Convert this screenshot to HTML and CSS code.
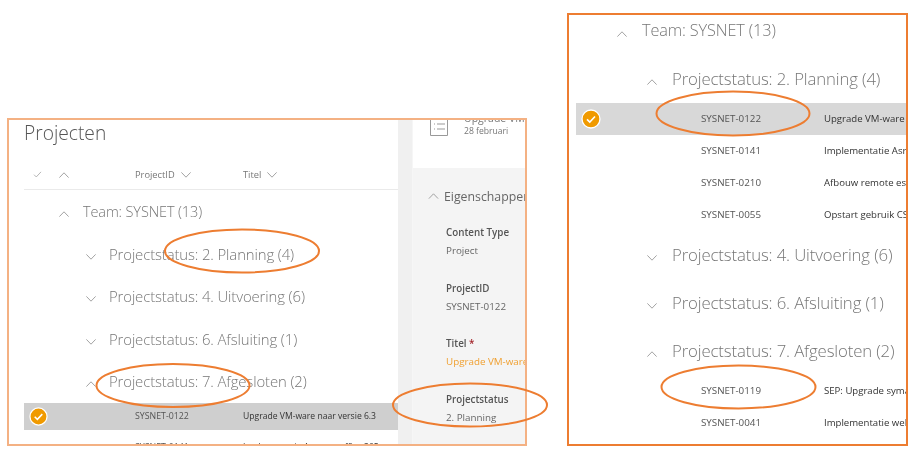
FILE: index.html
```html
<!DOCTYPE html>
<html lang="nl">
<head>
<meta charset="utf-8">
<title>Projecten</title>
<link rel="stylesheet" href="styles.css">
</head>
<body>
<svg width="0" height="0" class="defs">
  <symbol id="up" viewBox="0 0 10 6"><path d="M.4 5.6 5 .8l4.600 4.800" fill="none" stroke="#999" stroke-width=".9"/></symbol>
  <symbol id="down" viewBox="0 0 10 6"><path d="M.4 .4 5 5.200 9.600 .4" fill="none" stroke="#999" stroke-width=".9"/></symbol>
  <symbol id="tick" viewBox="0 0 10 8"><path d="M1 4.200 3.600 6.800 9 1" fill="none" stroke="#aaa" stroke-width="1"/></symbol>
  <symbol id="checked" viewBox="0 0 20 20"><circle cx="10" cy="10" r="9" fill="#f09a00" stroke="#fff" stroke-width="1.300"/><path d="M6 10.300 8.800 13 14 7.500" fill="none" stroke="#fff" stroke-width="1.600"/></symbol>
</svg>

<main class="canvas">
  <section class="panel panel-left">
    <div class="list">
      <h1 class="title">Projecten</h1>
      <div class="head">
        <svg class="tick"><use href="#tick"/></svg>
        <svg class="chev head-chev"><use href="#up"/></svg>
        <span class="col-id">ProjectID <svg class="chev"><use href="#down"/></svg></span>
        <span class="col-title">Titel <svg class="chev"><use href="#down"/></svg></span>
      </div>
      <div class="group team"><svg class="chev"><use href="#up"/></svg><span>Team: SYSNET (13)</span></div>
      <div class="group status"><svg class="chev"><use href="#down"/></svg><span>Projectstatus: 2. Planning (4)</span></div>
      <div class="group status"><svg class="chev"><use href="#down"/></svg><span>Projectstatus: 4. Uitvoering (6)</span></div>
      <div class="group status"><svg class="chev"><use href="#down"/></svg><span>Projectstatus: 6. Afsluiting (1)</span></div>
      <div class="group status"><svg class="chev"><use href="#up"/></svg><span>Projectstatus: 7. Afgesloten (2)</span></div>
      <div class="item selected"><span class="check"><svg class="check-icon"><use href="#checked"/></svg></span><span class="id">SYSNET-0122</span><span class="name">Upgrade VM-ware naar versie 6.3</span></div>
      <div class="item"><span class="check"></span><span class="id">SYSNET-0141</span><span class="name">Implementatie Asr naar office 365</span></div>
    </div>
    <div class="gutter"></div>
    <aside class="details">
      <div class="doc">
        <svg class="doc-icon" viewBox="0 0 18 24"><path d="M.5 0v23.500h17V0M4 7h1M7 7h8M4 12h1M7 12h8M4 17h1M7 17h8" fill="none" stroke="#999"/></svg>
        <div class="doc-text"><div class="doc-name">Upgrade VM-ware</div><div>28 februari</div></div>
      </div>
      <div class="props">
        <div class="props-head"><svg class="props-chev"><use href="#up"/></svg><span>Eigenschappen</span></div>
        <div class="field"><b>Content Type</b><span>Project</span></div>
        <div class="field"><b>ProjectID</b><span>SYSNET-0122</span></div>
        <div class="field"><b>Titel <i>*</i></b><span class="link">Upgrade VM-ware naar versie 6.3</span></div>
        <div class="field"><b>Projectstatus</b><span>2. Planning</span></div>
      </div>
    </aside>
  </section>

  <section class="panel panel-right">
    <div class="list">
      <div class="group team"><svg class="chev"><use href="#up"/></svg><span>Team: SYSNET (13)</span></div>
      <div class="group status"><svg class="chev"><use href="#up"/></svg><span>Projectstatus: 2. Planning (4)</span></div>
      <div class="item selected"><span class="check"><svg class="check-icon"><use href="#checked"/></svg></span><span class="id">SYSNET-0122</span><span class="name">Upgrade VM-ware naar versie 6.3</span></div>
      <div class="item"><span class="check"></span><span class="id">SYSNET-0141</span><span class="name">Implementatie Asr naar office 365</span></div>
      <div class="item"><span class="check"></span><span class="id">SYSNET-0210</span><span class="name">Afbouw remote essentials server</span></div>
      <div class="item"><span class="check"></span><span class="id">SYSNET-0055</span><span class="name">Opstart gebruik CSP licenties</span></div>
      <div class="group status"><svg class="chev"><use href="#down"/></svg><span>Projectstatus: 4. Uitvoering (6)</span></div>
      <div class="group status"><svg class="chev"><use href="#down"/></svg><span>Projectstatus: 6. Afsluiting (1)</span></div>
      <div class="group status"><svg class="chev"><use href="#up"/></svg><span>Projectstatus: 7. Afgesloten (2)</span></div>
      <div class="item"><span class="check"></span><span class="id">SYSNET-0119</span><span class="name">SEP: Upgrade symantec endpoint</span></div>
      <div class="item"><span class="check"></span><span class="id">SYSNET-0041</span><span class="name">Implementatie webserver cluster</span></div>
    </div>
  </section>

  <svg class="marks" viewBox="0 0 916 453">
    <ellipse cx="242" cy="251" rx="77" ry="21.500"/>
    <ellipse cx="173" cy="385.500" rx="76.500" ry="21.500"/>
    <ellipse cx="470" cy="405" rx="77" ry="21.500"/>
    <ellipse cx="733" cy="113.500" rx="76.500" ry="22"/>
    <ellipse cx="738.500" cy="387" rx="77" ry="21.500"/>
  </svg>
</main>
</body>
</html>
```

FILE: styles.css
```css
* { box-sizing: border-box; }

html, body { margin: 0; padding: 0; background: #fff; }

body {
  width: 916px;
  height: 453px;
  overflow: hidden;
  font-family: "Open Sans", "Liberation Sans", sans-serif;
}

.defs { position: absolute; }

.canvas {
  position: relative;
  display: flex;
  align-items: flex-start;
  width: 916px;
  height: 453px;
  padding-left: 7px;
}

.panel {
  display: flex;
  overflow: hidden;
  background: #fff;
  border-style: solid;
  border-width: 2px;
}

.panel-left {
  width: 520px;
  height: 328px;
  margin-top: 118px;
  border-color: #f4b183;
  padding-left: 15px;
}

.panel-right {
  width: 341px;
  height: 433px;
  margin-top: 13px;
  margin-left: 40px;
  border-color: #ed7d31;
  padding-left: 7px;
}

.list, .details { filter: blur(.3px); }

.panel-left .list { flex: 0 0 374px; }
.panel-right .list { flex: 0 0 auto; width: 100%; margin-top: -8px; }

.title {
  margin: 0;
  height: 42px;
  font-size: 19.200px;
  line-height: 26px;
  font-weight: 300;
  color: #555;
  white-space: nowrap;
}

.chev { display: block; width: 10px; height: 6px; flex: none; }

.head {
  display: flex;
  align-items: center;
  height: 28px;
  padding-bottom: 2px;
  border-bottom: 1px solid #eaeaea;
  font-size: 9.300px;
  color: #777;
}
.tick { width: 9px; height: 7px; margin-left: 9px; flex: none; }
.head-chev { margin-left: 17px; }
.col-id { display: flex; align-items: center; gap: 6px; margin-left: 66px; width: 108px; }
.col-title { display: flex; align-items: center; gap: 6px; }

.group {
  display: flex;
  align-items: center;
  color: #767676;
  font-weight: 300;
  white-space: nowrap;
}
.group .chev { position: relative; top: 3px; }

.panel-left .group { height: 42.500px; font-size: 14.900px; letter-spacing: -.12px; }
.panel-left .team { padding-left: 35px; gap: 14px; font-size: 14.500px; }
.panel-left .status { padding-left: 62px; gap: 13px; }

.panel-right .group { height: 48px; padding-bottom: 2px; font-size: 16.750px; letter-spacing: -.13px; }
.panel-right .group .chev { top: 4px; }
.panel-right .team { padding-left: 41px; gap: 15px; font-size: 16.300px; }
.panel-right .status { padding-left: 71px; gap: 15px; }

.item { display: flex; align-items: center; white-space: nowrap; }
.item .id { flex: none; color: #555; }
.item .name { flex: none; color: #333; }
.check { flex: none; display: flex; align-items: center; }
.check-icon { display: block; }

.panel-left .item { height: 34px; font-size: 8.800px; }
.panel-left .selected { height: 27px; }
.panel-left .name { font-size: 8.600px; }
.panel-left .check { width: 111px; padding-left: 5px; }
.panel-left .check-icon { width: 19px; height: 19px; }
.panel-left .id { width: 108px; }
.panel-left .selected { background: #cfcfcf; }

.panel-right .item { height: 32px; padding-bottom: 1px; font-size: 9.800px; }
.panel-right .name { font-size: 9.600px; }
.panel-right .check { width: 125px; padding-left: 5px; }
.panel-right .check-icon { width: 20px; height: 20px; }
.panel-right .id { width: 123px; }
.panel-right .selected { background: #d8d8d8; }

.gutter {
  flex: 0 0 15px;
  background: #f0f0f0;
  border-right: 1px solid #f6f6f6;
}

.details { flex: 0 0 112px; display: flex; flex-direction: column; overflow: hidden; }

.doc {
  display: flex;
  height: 56px;
  background: #fff;
  padding-left: 17px;
  gap: 16px;
  margin-top: -8px;
  flex: none;
}
.doc-icon { width: 18px; height: 24px; flex: none; }
.doc-text { font-size: 8.600px; line-height: 13px; color: #777; white-space: nowrap; }
.doc-name { font-size: 10.500px; line-height: 13px; }

.props {
  flex: 1;
  background: #f4f4f4;
  padding-left: 33px;
  white-space: nowrap;
  font-size: 9.800px;
  color: #666;
}

.props-head {
  display: flex;
  align-items: center;
  gap: 5px;
  height: 56px;
  margin-left: -18px;
  font-size: 12.300px;
  color: #666;
}
.props-chev { width: 11px; height: 6px; flex: none; }

.field {
  display: flex;
  flex-direction: column;
  height: 55.500px;
  line-height: 18px;
}
.field b { font-weight: 600; color: #555; }
.field i { font-style: normal; color: #a4262c; }
.link { color: #f0a030; }

.marks {
  position: absolute;
  left: 0;
  top: 0;
  width: 916px;
  height: 453px;
  fill: none;
  stroke: #ed7d31;
  stroke-width: 2;
  pointer-events: none;
}
```
